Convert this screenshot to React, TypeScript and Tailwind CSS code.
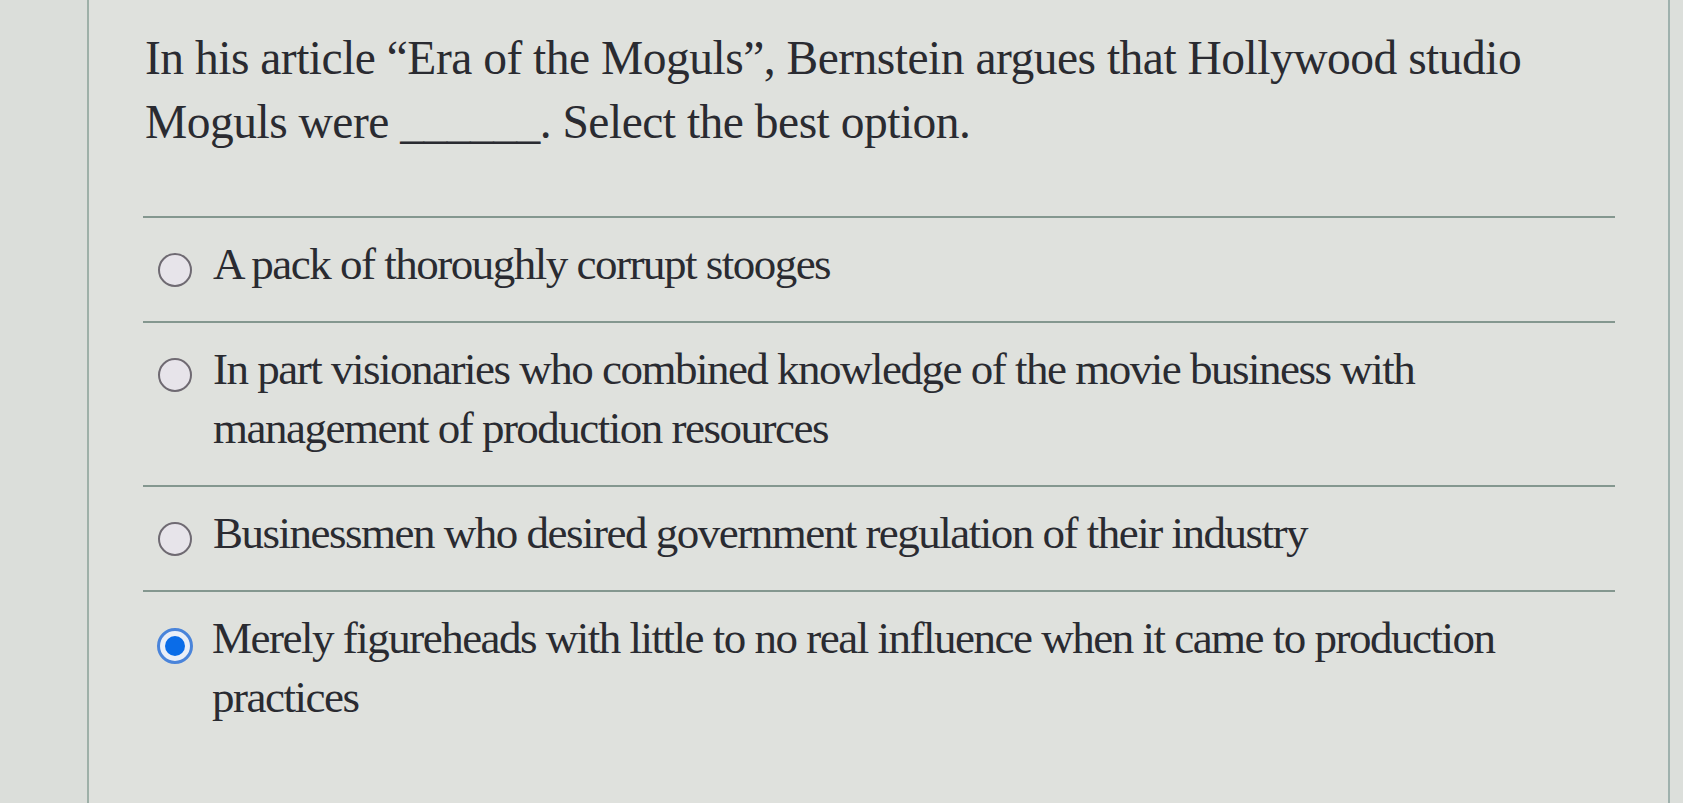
const options = [
  { text: "A pack of thoroughly corrupt stooges", checked: false },
  {
    text: "In part visionaries who combined knowledge of the movie business with management of production resources",
    checked: false,
  },
  { text: "Businessmen who desired government regulation of their industry", checked: false },
  {
    text: "Merely figureheads with little to no real influence when it came to production practices",
    checked: true,
  },
]

function Radio({ checked }: { checked: boolean }) {
  if (checked) {
    return (
      <span className="mt-[19px] flex h-[36px] w-[36px] shrink-0 items-center justify-center rounded-full border-[3px] border-[#4a84da] bg-[#e9eef8]">
        <span className="h-[20px] w-[20px] rounded-full bg-[#0a6ce8]" />
      </span>
    )
  }
  return (
    <span className="ml-[1px] mr-[2px] mt-[18px] h-[34px] w-[34px] shrink-0 rounded-full border-[2.5px] border-[#6f6a72] bg-[#e7e4ea]" />
  )
}

export default function App() {
  return (
    <div
      className="flex h-screen w-full overflow-hidden bg-[#dfe1dd] text-[#2a2b31]"
      style={{ fontFamily: '"Liberation Serif", "DejaVu Serif", serif' }}
    >
      {/* left gutter */}
      <div className="w-[89px] shrink-0 border-r-2 border-[#9eb0a8] bg-[#dbdeda]" />

      <div className="flex w-[1581px] shrink-0 border-r-2 border-[#9fb1ad] pl-[54px] pr-[53px]">
        <div className="w-[1472px]">
          <h1 className="pl-[2px] pt-[26px] text-[47.5px] font-normal leading-[64px] tracking-[-0.5px]">
            In his article “Era of the Moguls”, Bernstein argues that Hollywood studio Moguls were ______. Select the
            best option.
          </h1>

          <div className="mt-[62px]">
            {options.map((o) => (
              <label
                key={o.text}
                className="flex items-start gap-[19px] border-t-2 border-[#84978f] pb-[27px] pl-[14px] pt-[17px]"
              >
                <Radio checked={o.checked} />
                <span className="text-[45px] leading-[59px] tracking-[-1.5px]">{o.text}</span>
              </label>
            ))}
          </div>
        </div>
      </div>

      <div className="flex-1 bg-[#dcdfdb]" />
    </div>
  )
}
